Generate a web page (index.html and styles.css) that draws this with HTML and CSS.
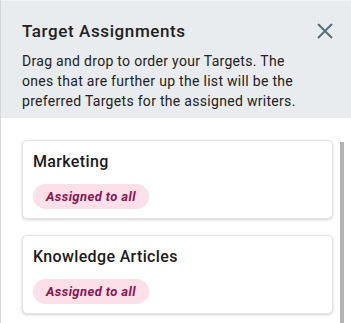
FILE: index.html
```html
<!DOCTYPE html>
<html>
<head>
<meta charset="utf-8">
<link rel="stylesheet" href="styles.css">
</head>
<body>
<div class="panel">
  <div class="header">
    <div class="title-row">
      <h2 class="title">Target Assignments</h2>
      <button class="close" aria-label="Close">
        <svg width="16" height="16" viewBox="0 0 16 16"><path d="M1 1L15 15M15 1L1 15" stroke="#546e7a" stroke-width="2" fill="none"/></svg>
      </button>
    </div>
    <p class="desc">Drag and drop to order your Targets. The ones that are further up the list will be the preferred Targets for the assigned writers.</p>
  </div>
  <div class="scroll-area">
    <div class="list">
      <div class="card">
        <div class="card-title">Marketing</div>
        <span class="badge">Assigned to all</span>
      </div>
      <div class="card">
        <div class="card-title">Knowledge Articles</div>
        <span class="badge">Assigned to all</span>
      </div>
    </div>
    <div class="thumb"></div>
  </div>
</div>
</body>
</html>
```
FILE: styles.css
```css
html, body {
  margin: 0;
  padding: 0;
  background: #ffffff;
  overflow: hidden;
}
body {
  font-family: Roboto, "Liberation Sans", sans-serif;
  color: #212121;
}
.panel {
  width: 350px;
  height: 323px;
  border-left: 1px solid #d6d6d6;
  display: flex;
  flex-direction: column;
  background: #fff;
}
.header {
  background: #e9ecef;
  height: 118px;
  flex: none;
  box-sizing: border-box;
  padding: 19px 18px 0 21px;
  border-top: 1px solid #f2f3f5;
}
.title-row {
  display: flex;
  align-items: center;
  justify-content: space-between;
  height: 22px;
}
.title {
  margin: 0;
  font-size: 17px;
  font-weight: 500;
  letter-spacing: 0.6px;
  color: #212121;
  line-height: 22px;
}
.close {
  border: 0;
  background: none;
  padding: 0;
  width: 16px;
  height: 16px;
  display: flex;
  cursor: pointer;
}
.desc {
  margin: 9px 0 0;
  max-width: 285px;
  font-size: 14px;
  letter-spacing: 0.3px;
  line-height: 20px;
  color: #212121;
}
.scroll-area {
  position: relative;
  flex: 1;
  min-height: 0;
  overflow: hidden;
}
.list {
  padding: 22px 18px 12px 21px;
  display: flex;
  flex-direction: column;
  gap: 16px;
}
.thumb {
  position: absolute;
  top: 24px;
  right: 7px;
  width: 4px;
  height: 260px;
  background: #b3b3b3;
}
.card {
  flex: none;
  border: 1px solid #e3e3e3;
  border-radius: 5px;
  box-shadow: 0 1px 3px rgba(0, 0, 0, 0.18);
  padding: 11px 9px 9px 10px;
  background: #fff;
  height: 79px;
  box-sizing: border-box;
}
.card-title {
  font-size: 16px;
  font-weight: 500;
  letter-spacing: 0.35px;
  line-height: 20px;
  color: #1a1a1a;
}
.badge {
  display: inline-block;
  margin-top: 12px;
  height: 25px;
  line-height: 25px;
  padding: 0 13px;
  border-radius: 13px;
  background: #fbe0ea;
  color: #8a1451;
  font-size: 13px;
  font-weight: 700;
  font-style: italic;
  letter-spacing: 0.4px;
}
```
